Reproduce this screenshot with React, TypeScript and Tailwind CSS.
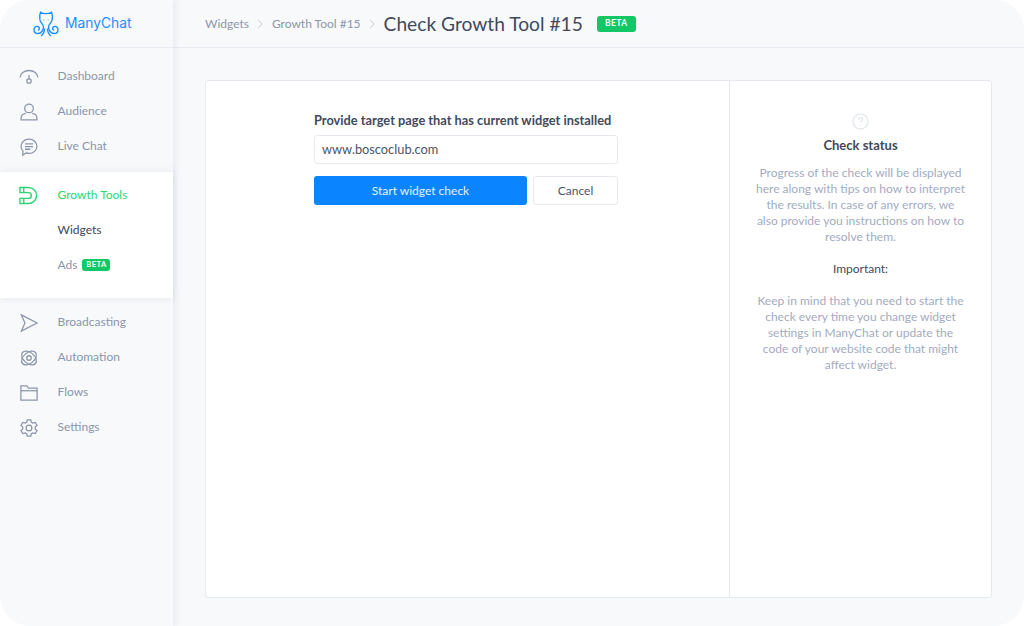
import type { ReactNode } from 'react';

const ICON = 'h-[18px] w-[18px] fill-none stroke-current stroke-[1.4]';

function Logo() {
  return (
    <svg viewBox="0 0 26 26" className="h-[26px] w-[26px] fill-none stroke-[#1e8fff] stroke-[1.4]">
      <path d="M6.800 8.500C6.500 5.500 6.800 2.800 7.500 1.200c1.300 1 2.500 1.400 5.300 1.400 2.800 0 4.300-.4 5.700-1.400.9 2 1.100 5 .7 7.300-.5 3.500-3.700 4.500-3.700 7.500 0 3.500 2.500 6.500 5.500 6.500 2.500 0 4-1.800 4-3.800 0-2-1.400-3.300-3-3.300-1.400 0-2.400 1-2.400 2.200 0 1 .7 1.700 1.500 1.700" />
      <path d="M6.800 8.500c.5 3.500 3.700 4.500 3.700 7.500 0 3.500-2.500 6.500-5.500 6.500-2.500 0-4-1.800-4-3.800 0-2 1.400-3.300 3-3.300 1.400 0 2.400 1 2.400 2.200 0 1-.7 1.700-1.500 1.700" />
      <path d="M11.500 17.500c0 3-1.500 6-3.500 7.500M14.500 17.500c0 3 1.500 6 3.500 7.500" />
      <path d="M10.800 8.800v.4M15.200 8.800v.4" className="stroke-[1.800]" />
    </svg>
  );
}

function DashboardIcon() {
  return (
    <svg viewBox="0 0 20 20" className="h-[20px] w-[20px] fill-none stroke-current stroke-[1.3]">
      <path d="M1 10.500C1.500 6.500 5 3.500 10 3.500s8.500 3 9 7" />
      <path d="M10 8v4" />
      <circle cx="10" cy="14" r="2.200" />
    </svg>
  );
}

function AudienceIcon() {
  return (
    <svg viewBox="0 0 20 20" className={ICON}>
      <circle cx="10" cy="6" r="4.800" />
      <path d="M6.500 11.500C3.500 12 1.200 13.500 1.200 16.500v2.300h17.600v-2.300c0-3-2.300-4.500-5.300-5" />
    </svg>
  );
}

function ChatIcon() {
  return (
    <svg viewBox="0 0 20 20" className={ICON}>
      <path d="M10 1.200c5 0 8.800 3.500 8.800 8s-3.800 8-8.800 8c-1.200 0-2.300-.2-3.300-.6L3 19.200l.4-4.200C2 13.600 1.200 11.500 1.200 9.200c0-4.500 3.800-8 8.800-8z" />
      <path d="M5.500 6.500h9M5.500 9.500h9M5.500 12.500h6" />
    </svg>
  );
}

function MagnetIcon() {
  return (
    <svg viewBox="0 0 20 20" className="h-[19px] w-[19px] fill-none stroke-current stroke-[1.5]">
      <path d="M1 1.500h9a8.500 8.500 0 0 1 0 17H1v-5.500h9a3 3 0 0 0 0-6H1z" />
      <path d="M5 1.500V7M5 13v5.500" />
    </svg>
  );
}

function SendIcon() {
  return (
    <svg viewBox="0 0 20 20" className={ICON}>
      <path d="M1.500 1L19 10 1.500 19 5.500 10z" />
    </svg>
  );
}

function AtomIcon() {
  return (
    <svg viewBox="0 0 20 20" className={ICON}>
      <ellipse cx="10" cy="10" rx="9.500" ry="6" transform="rotate(40 10 10)" />
      <ellipse cx="10" cy="10" rx="9.500" ry="6" transform="rotate(-40 10 10)" />
      <circle cx="10" cy="10" r="2.500" />
    </svg>
  );
}

function FolderIcon() {
  return (
    <svg viewBox="0 0 20 20" className={ICON}>
      <path d="M1 18V2h6.500l2 2.500H19V18z" />
      <path d="M1 7.500h18" />
    </svg>
  );
}

function GearIcon() {
  return (
    <svg viewBox="0 0 20 20" className={ICON}>
      <path d="M8 1h4l.6 2.600 1.700 1 2.600-.8 2 3.400-2 1.800v2l2 1.800-2 3.400-2.600-.8-1.700 1-.6 2.600H8l-.6-2.600-1.700-1-2.600.8-2-3.400 2-1.800V9L1.100 7.200l2-3.400 2.600.8 1.700-1z" />
      <circle cx="10" cy="10" r="3.200" />
    </svg>
  );
}

function Chevron() {
  return (
    <svg viewBox="0 0 8 12" className="mx-[8px] h-[10px] w-[7px] fill-none stroke-[#c3cad6] stroke-[1.2]">
      <path d="M1 1l5 5-5 5" />
    </svg>
  );
}

function Beta({ small }: { small?: boolean }) {
  return (
    <span
      className={
        small
          ? 'ml-[5px] flex h-[12px] w-[28px] items-center justify-center rounded-[3px] bg-[#12c765] text-[7.500px] font-bold tracking-[0.5px] text-white'
          : 'ml-[14px] flex h-[16px] w-[39px] items-center justify-center rounded-[3px] bg-[#12c765] text-[8.500px] font-bold tracking-[0.5px] text-white'
      }
    >
      BETA
    </span>
  );
}

function NavItem({ icon, label, color = 'text-[#8b96ab]' }: { icon?: ReactNode; label: ReactNode; color?: string }) {
  return (
    <div className={`flex h-[35px] items-center text-[12px] ${color}`}>
      <div className="flex w-[57.500px] justify-center">
        <div className="flex w-[20px] items-center justify-center">{icon}</div>
      </div>
      <div className="flex items-center pb-[1px]">{label}</div>
    </div>
  );
}

export default function App() {
  return (
    <div className="h-[626px] w-[1024px] overflow-hidden bg-white font-['Lato',sans-serif]">
      <div className="flex h-full overflow-hidden rounded-[30px] bg-[#f8f9fb]">
        <aside className="z-10 h-full w-[173px] shrink-0 shadow-[2px_0_6px_rgba(190,198,215,0.35)]">
          <div className="flex h-[48px] items-center border-b border-[#e9ecf2] pl-[33px]">
            <Logo />
            <span className="ml-[6px] font-['Inter',sans-serif] text-[13.800px] text-[#1e8fff]">ManyChat</span>
          </div>
          <nav className="pt-[11px]">
            <NavItem icon={<DashboardIcon />} label="Dashboard" />
            <NavItem icon={<AudienceIcon />} label="Audience" />
            <NavItem icon={<ChatIcon />} label="Live Chat" />
            <div className="mt-[8px] bg-white pt-[6px] pb-[15px] shadow-[0_0_8px_rgba(190,198,215,0.35)]">
              <NavItem icon={<MagnetIcon />} label="Growth Tools" color="text-[#2bd673]" />
              <NavItem label="Widgets" color="text-[#3c4658]" />
              <NavItem
                label={
                  <>
                    Ads
                    <Beta small />
                  </>
                }
              />
            </div>
            <div className="mt-[7px]">
              <NavItem icon={<SendIcon />} label="Broadcasting" />
              <NavItem icon={<AtomIcon />} label="Automation" />
              <NavItem icon={<FolderIcon />} label="Flows" />
              <NavItem icon={<GearIcon />} label="Settings" />
            </div>
          </nav>
        </aside>

        <main className="min-w-0 flex-1">
          <header className="flex h-[48px] items-center border-b border-[#e9ecf2] pl-[32px]">
            <span className="text-[12px] text-[#8b96ab]">Widgets</span>
            <Chevron />
            <span className="text-[12px] text-[#8b96ab]">Growth Tool #15</span>
            <Chevron />
            <h1 className="text-[19.200px] leading-none text-[#3f4a5c]">Check Growth Tool #15</h1>
            <Beta />
          </header>

          <div className="px-[32px] pt-[32px]">
            <div className="flex h-[518px] rounded-[3px] border border-[#e6e9f0] bg-white">
              <section className="w-[524px] border-r border-[#e6e9f0] pt-[30px] pl-[108px]">
                <label className="block h-[18px] text-[12.800px] leading-[18px] font-bold text-[#3f4a5c]">
                  Provide target page that has current widget installed
                </label>
                <div className="mt-[6px] flex h-[29px] w-[304px] items-center rounded-[3px] border border-[#e6e9f0] px-[7px] text-[12.800px] text-[#4b5567]">
                  www.boscoclub.com
                </div>
                <div className="mt-[12px] flex w-[304px] gap-[6px]">
                  <button className="h-[29px] w-[213px] rounded-[3px] bg-[#0a84ff] text-[12px] text-[#e6f2ff]">
                    Start widget check
                  </button>
                  <button className="h-[29px] flex-1 rounded-[3px] border border-[#e6e9f0] bg-white text-[12px] text-[#4b5567]">
                    Cancel
                  </button>
                </div>
              </section>

              <section className="flex-1 px-[25.500px] pt-[32px] text-center text-[12px] leading-[16px] text-[#a2acbf]">
                <svg viewBox="0 0 18 18" className="mx-auto h-[17px] w-[17px] fill-none stroke-[#dfe4ec] stroke-[1.2]">
                  <circle cx="9" cy="9" r="8" />
                  <path d="M6.800 7c0-1.300 1-2.200 2.200-2.200s2.200.9 2.200 2.100c0 1.700-2.200 1.700-2.200 3.600M9 12.300v1" />
                </svg>
                <h2 className="mt-[5px] h-[20px] text-[13px] leading-[20px] font-bold text-[#3f4a5c]">Check status</h2>
                <p className="mt-[10px]">
                  Progress of the check will be displayed here along with tips on how to interpret the results. In case of any errors, we also provide you instructions on how to resolve them.
                </p>
                <p className="mt-[16px] text-[#3f4a5c]">Important:</p>
                <p className="mt-[16px]">
                  Keep in mind that you need to start the check every time you change widget settings in ManyChat or update the code of your website code that might affect widget.
                </p>
              </section>
            </div>
          </div>
        </main>
      </div>
    </div>
  );
}
